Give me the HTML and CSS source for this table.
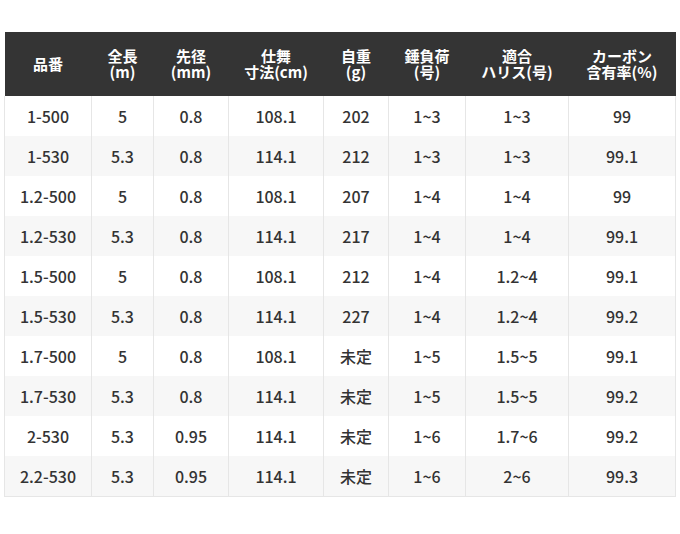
FILE: index.html
```html
<!DOCTYPE html>
<html lang="ja">
<head>
<meta charset="utf-8">
<link rel="stylesheet" href="styles.css">
</head>
<body>
<table class="spec">
  <colgroup>
    <col class="c1"><col class="c2"><col class="c3"><col class="c4"><col class="c5"><col class="c6"><col class="c7"><col class="c8">
  </colgroup>
  <thead>
    <tr>
      <th>品番</th>
      <th>全長<br>(m)</th>
      <th>先径<br>(mm)</th>
      <th>仕舞<br>寸法(cm)</th>
      <th>自重<br>(g)</th>
      <th>錘負荷<br>(号)</th>
      <th>適合<br>ハリス(号)</th>
      <th>カーボン<br>含有率(%)</th>
    </tr>
  </thead>
  <tbody>
    <tr><td>1-500</td><td>5</td><td>0.8</td><td>108.1</td><td>202</td><td>1~3</td><td>1~3</td><td>99</td></tr>
    <tr><td>1-530</td><td>5.3</td><td>0.8</td><td>114.1</td><td>212</td><td>1~3</td><td>1~3</td><td>99.1</td></tr>
    <tr><td>1.2-500</td><td>5</td><td>0.8</td><td>108.1</td><td>207</td><td>1~4</td><td>1~4</td><td>99</td></tr>
    <tr><td>1.2-530</td><td>5.3</td><td>0.8</td><td>114.1</td><td>217</td><td>1~4</td><td>1~4</td><td>99.1</td></tr>
    <tr><td>1.5-500</td><td>5</td><td>0.8</td><td>108.1</td><td>212</td><td>1~4</td><td>1.2~4</td><td>99.1</td></tr>
    <tr><td>1.5-530</td><td>5.3</td><td>0.8</td><td>114.1</td><td>227</td><td>1~4</td><td>1.2~4</td><td>99.2</td></tr>
    <tr><td>1.7-500</td><td>5</td><td>0.8</td><td>108.1</td><td>未定</td><td>1~5</td><td>1.5~5</td><td>99.1</td></tr>
    <tr><td>1.7-530</td><td>5.3</td><td>0.8</td><td>114.1</td><td>未定</td><td>1~5</td><td>1.5~5</td><td>99.2</td></tr>
    <tr><td>2-530</td><td>5.3</td><td>0.95</td><td>114.1</td><td>未定</td><td>1~6</td><td>1.7~6</td><td>99.2</td></tr>
    <tr><td>2.2-530</td><td>5.3</td><td>0.95</td><td>114.1</td><td>未定</td><td>1~6</td><td>2~6</td><td>99.3</td></tr>
  </tbody>
</table>
</body>
</html>
```
FILE: styles.css
```css
html, body {
  margin: 0;
  padding: 0;
  background: #fff;
}
body {
  padding: 32px 5px 0 4px;
  font-family: "Noto Sans CJK JP", "Noto Sans", sans-serif;
  color: #333;
}
.spec {
  border-collapse: collapse;
  table-layout: fixed;
  width: 671px;
}
.c1 { width: 87px; }
.c2 { width: 62px; }
.c3 { width: 75px; }
.c4 { width: 95px; }
.c5 { width: 65px; }
.c6 { width: 77px; }
.c7 { width: 103px; }
.c8 { width: 107px; }
.spec th {
  background: #343434;
  color: #fff;
  font-size: 15px;
  font-weight: 700;
  line-height: 16px;
  height: 64px;
  padding: 0;
  text-align: center;
  vertical-align: middle;
}
.spec td {
  height: 40px;
  padding: 0;
  font-size: 16px;
  font-weight: 500;
  text-align: center;
  vertical-align: middle;
  border-left: 1px solid #e6e6e6;
  border-right: 1px solid #e6e6e6;
}
.spec tbody tr:nth-child(even) td {
  background: #f7f7f7;
}
.spec tbody tr:last-child td {
  border-bottom: 1px solid #e6e6e6;
}
```
